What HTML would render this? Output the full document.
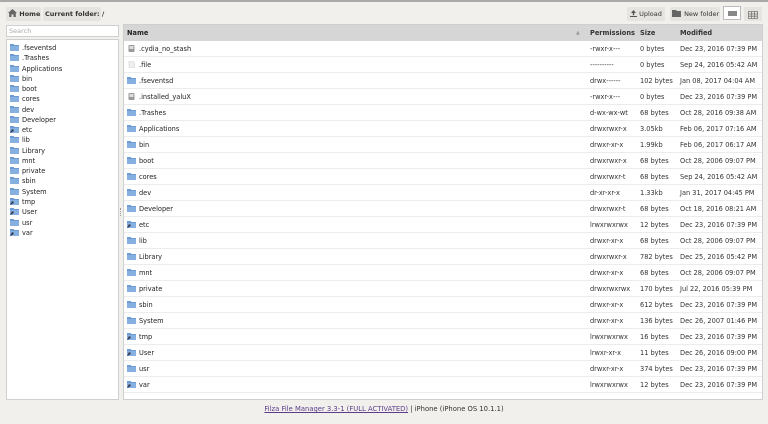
<!DOCTYPE html>
<html><head><meta charset="utf-8"><style>
*{margin:0;padding:0;box-sizing:border-box}
body{width:768px;height:424px;background:#f2f0ec;font-family:"DejaVu Sans","Liberation Sans",sans-serif;color:#222;position:relative;overflow:hidden}
.topline{position:absolute;left:0;top:0;width:768px;height:2px;background:#a9a9a9}
.btn{position:absolute;top:7px;height:14px;background:#e6e4e0;border-radius:2px;font-size:6.5px;font-weight:bold;line-height:14px;color:#333;white-space:nowrap}
.left{position:absolute;left:6px;top:39px;width:113px;height:361px;background:#fff;border:1px solid #cfcfcf}
.search{position:absolute;left:6px;top:25px;width:113px;height:12px;background:#fff;border:1px solid #cfcfcf;font-size:6.5px;color:#aaa;padding-left:2px;line-height:11px}
.left div{height:10.28px;font-size:6.6px;line-height:10.28px;padding-left:3px;white-space:nowrap}
.fi{display:inline-block;width:9px;height:7px;vertical-align:-1px;margin-right:3px}
.table{position:absolute;left:123px;top:24px;width:640px;height:376px;background:#fff;border:1px solid #cfcfcf}
.hd{height:16px;background:#d6d6d6;font-size:6.6px;font-weight:bold;line-height:16px;position:relative}
.row{height:16px;border-bottom:1px solid #ececec;position:relative;font-size:6.6px;line-height:16px}
.c{position:absolute;top:0;white-space:nowrap}
.n{left:3px}.p{left:466px;color:#333}.s{left:516px;color:#333}.m{left:556px;color:#333}
.footer{position:absolute;top:405px;left:0;width:768px;text-align:center;font-size:6.8px;color:#333}
.footer a{color:#5b3d8a;text-decoration:underline}
</style></head><body>
<div class="topline"></div>
<div class="btn" style="left:6px;width:35px;padding-left:2px"><svg width="9" height="8" viewBox="0 0 9 8" style="vertical-align:-1px"><path d="M4.5 0L0 4h1.2v4h2.3V5.5h2V8h2.3V4H9z" fill="#666"/></svg> Home</div>
<div class="btn" style="left:43px;width:58px;padding-left:2px">Current folder: /</div>
<div class="btn" style="left:627px;width:38px;font-weight:normal;padding-left:3px"><svg width="7" height="7" viewBox="0 0 7 7" style="vertical-align:-1px"><path d="M3.5 0L1 3h1.8v2.2h1.4V3H6zM0 6h7v1H0z" fill="#555"/></svg> Upload</div>
<div class="btn" style="left:670px;width:50px;font-weight:normal;padding-left:2px"><svg width="10" height="7" viewBox="0 0 10 7" style="vertical-align:-1px"><path d="M0 0h4l1 1h4v6H0z" fill="#666"/></svg> New folder</div>
<div style="position:absolute;left:723px;top:6px;width:18px;height:14px;background:#fff;border:1px solid #bbb"><div style="margin:4px 4px;width:9px;height:5px;background:#888"></div></div>
<div style="position:absolute;left:744px;top:7px;width:18px;height:14px;background:#e6e4e0"><svg width="10" height="8" viewBox="0 0 10 8" style="margin:3px 4px"><path d="M.5.5h9v7h-9zM.5 3h9M.5 5.2h9M3.5.5v7M6.5.5v7" stroke="#777" fill="none" stroke-width=".8"/></svg></div>
<div class="search">Search</div>
<div class="left" id="L"></div>
<div style="position:absolute;left:120px;top:208px;width:1px;height:8px;border-left:1px dotted #999"></div>
<div class="table" id="T"><div class="hd"><span class="c n">Name</span><span class="c" style="left:452px;color:#999;font-size:5px">▲</span><span class="c p">Permissions</span><span class="c s">Size</span><span class="c m">Modified</span></div></div>
<div class="footer"><a>Filza File Manager 3.3-1 (FULL ACTIVATED)</a> | iPhone (iPhone OS 10.1.1)</div>
<script>
var fold='<svg class="fi" viewBox="0 0 9 7"><path d="M0 0h3.5l1 1H9v6H0z" fill="#6c9ad2"/><path d="M0 2h9v5H0z" fill="#86b0e0"/></svg>';
var link='<svg class="fi" viewBox="0 0 9 7"><path d="M0 0h3.5l1 1H9v6H0z" fill="#6c9ad2"/><path d="M0 2h9v5H0z" fill="#86b0e0"/><path d="M.5 6.5l2.5-2.5M1.5 4h1.5v1.5" stroke="#223" stroke-width=".9" fill="none"/></svg>';
var bin='<svg class="fi" viewBox="0 0 9 7"><rect x="1.5" y="0" width="6" height="7" rx="1" fill="#999"/><rect x="2.5" y="1" width="4" height="3" fill="#ddd"/></svg>';
var doc='<svg class="fi" viewBox="0 0 9 7"><path d="M2 0h4l1.5 1.5V7H2z" fill="#eee" stroke="#ccc" stroke-width=".5"/></svg>';
var rows=[["bin",".cydia_no_stash","-rwxr-x---","0 bytes","Dec 23, 2016 07:39 PM"],["doc",".file","----------","0 bytes","Sep 24, 2016 05:42 AM"],["f",".fseventsd","drwx------","102 bytes","Jan 08, 2017 04:04 AM"],["bin",".installed_yaluX","-rwxr-x---","0 bytes","Dec 23, 2016 07:39 PM"],["f",".Trashes","d-wx-wx-wt","68 bytes","Oct 28, 2016 09:38 AM"],["f","Applications","drwxrwxr-x","3.05kb","Feb 06, 2017 07:16 AM"],["f","bin","drwxr-xr-x","1.99kb","Feb 06, 2017 06:17 AM"],["f","boot","drwxrwxr-x","68 bytes","Oct 28, 2006 09:07 PM"],["f","cores","drwxrwxr-t","68 bytes","Sep 24, 2016 05:42 AM"],["f","dev","dr-xr-xr-x","1.33kb","Jan 31, 2017 04:45 PM"],["f","Developer","drwxrwxr-t","68 bytes","Oct 18, 2016 08:21 AM"],["l","etc","lrwxrwxrwx","12 bytes","Dec 23, 2016 07:39 PM"],["f","lib","drwxr-xr-x","68 bytes","Oct 28, 2006 09:07 PM"],["f","Library","drwxrwxr-x","782 bytes","Dec 25, 2016 05:42 PM"],["f","mnt","drwxr-xr-x","68 bytes","Oct 28, 2006 09:07 PM"],["f","private","drwxrwxrwx","170 bytes","Jul 22, 2016 05:39 PM"],["f","sbin","drwxr-xr-x","612 bytes","Dec 23, 2016 07:39 PM"],["f","System","drwxr-xr-x","136 bytes","Dec 26, 2007 01:46 PM"],["l","tmp","lrwxrwxrwx","16 bytes","Dec 23, 2016 07:39 PM"],["l","User","lrwxr-xr-x","11 bytes","Dec 26, 2016 09:00 PM"],["f","usr","drwxr-xr-x","374 bytes","Dec 23, 2016 07:39 PM"],["l","var","lrwxrwxrwx","12 bytes","Dec 23, 2016 07:39 PM"]];
var ic={f:fold,l:link,bin:bin,doc:doc},T='',L='';
rows.forEach(function(r){T+='<div class="row"><span class="c n">'+ic[r[0]]+r[1]+'</span><span class="c p">'+r[2]+'</span><span class="c s">'+r[3]+'</span><span class="c m">'+r[4]+'</span></div>';
if(r[0]=='f'||r[0]=='l')L+='<div>'+ic[r[0]]+r[1]+'</div>';});
document.getElementById('T').innerHTML+=T;
document.getElementById('L').innerHTML='<div style="height:3px"></div>'+L;
</script>
</body></html>
